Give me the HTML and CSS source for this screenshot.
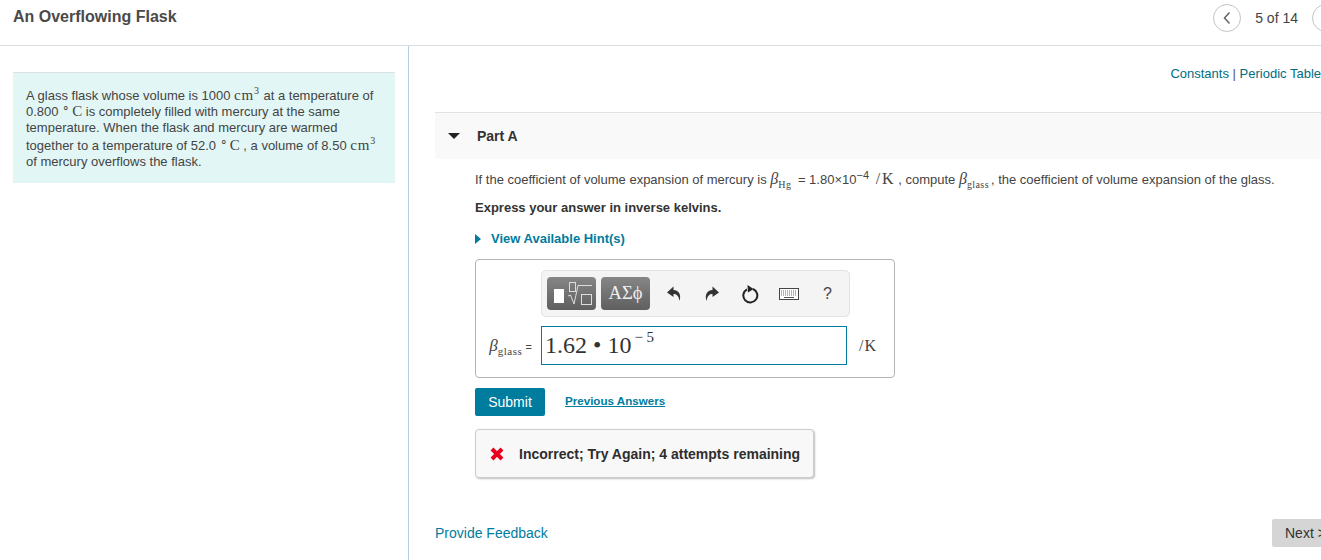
FILE: index.html
```html
<!DOCTYPE html>
<html lang="en">
<head>
    <meta charset="UTF-8">
    <meta name="viewport" content="width=device-width, initial-scale=1.0">
    <title>An Overflowing Flask</title>
    <link rel="stylesheet" href="styles.css">
</head>
<body>
    <div class="header">
        <div class="title">An Overflowing Flask</div>
        <div class="pager">
            <span class="pager-btn">
                <svg width="10" height="14" viewBox="0 0 10 14"><path d="M7.500 1.500 L2.500 7 L7.500 12.500" fill="none" stroke="#666" stroke-width="1.500"/></svg>
            </span>
            <span class="pager-text">5 of 14</span>
            <span class="pager-btn"></span>
        </div>
    </div>

    <div class="main">
        <div class="left">
            <div class="intro">
                <div>A glass flask whose volume is 1000 <span class="math cm">cm<sup>3</sup></span> at a temperature of</div>
                <div>0.800 <span class="math"><sup class="deg">∘</sup>C</span> is completely filled with mercury at the same</div>
                <div>temperature. When the flask and mercury are warmed</div>
                <div class="tall">together to a temperature of 52.0 <span class="math"><sup class="deg">∘</sup>C</span> , a volume of 8.50 <span class="math cm">cm<sup>3</sup></span></div>
                <div>of mercury overflows the flask.</div>
            </div>
        </div>

        <div class="right">
            <div class="top-links">
                <a href="#">Constants</a> <span class="sep">|</span> <a href="#">Periodic Table</a>
            </div>

            <div class="part-head">
                <span class="part-arrow"></span>
                <span class="part-name">Part A</span>
            </div>

            <div class="part-body">
                <p class="question">If the coefficient of volume expansion of mercury is <span class="math symbol"><i class="beta">β</i><sub>Hg</sub></span> = 1.80×10<sup class="exp">−4</sup> <span class="math unit">/K</span> , compute <span class="math symbol-end"><i class="beta">β</i><sub>glass</sub></span>, the coefficient of volume expansion of the glass.</p>
                <p class="express">Express your answer in inverse kelvins.</p>
                <a class="hints" href="#"><span class="hint-arrow"></span>View Available Hint(s)</a>

                <div class="answer-box">
                    <div class="toolbar">
                        <span class="tool-btn">
                            <svg width="49" height="33" viewBox="0 0 49 33">
                                <rect x="7" y="12" width="10" height="14" fill="#fff"/>
                                <rect x="22.500" y="5.500" width="6" height="9" fill="none" stroke="#ddd"/>
                                <path d="M21 19 L23.500 18 L27 27 L31 8.500 H45" fill="none" stroke="#ddd"/>
                                <rect x="34.500" y="17.500" width="10" height="10" fill="none" stroke="#ddd"/>
                            </svg>
                        </span>
                        <span class="tool-btn tool-greek">ΑΣϕ</span>
                        <span class="tool-icon">
                            <svg width="16" height="16" viewBox="0 0 16 16"><path d="M7.500 0.500 L1 6.500 L7.500 11 V8 C10.500 8 12.500 9.500 13.500 15 C15.500 9 13 4 7.500 4 Z" fill="#333"/></svg>
                        </span>
                        <span class="tool-icon">
                            <svg width="16" height="16" viewBox="0 0 16 16"><path d="M8.500 0.500 L15 6.500 L8.500 11 V8 C5.500 8 3.500 9.500 2.500 15 C0.500 9 3 4 8.500 4 Z" fill="#333"/></svg>
                        </span>
                        <span class="tool-icon">
                            <svg width="18" height="20" viewBox="0 0 18 20"><path d="M11 5 A7 7 0 1 1 5 5.300" fill="none" stroke="#222" stroke-width="2"/><path d="M5.500 1 L11.500 5 L6 8.500 Z" fill="#222"/></svg>
                        </span>
                        <span class="tool-icon">
                            <svg width="20" height="12" viewBox="0 0 20 12"><rect x="0.500" y="0.500" width="19" height="11" fill="#fff" stroke="#444"/><path d="M2 3 H18 M2 5 H18 M2 7 H18" stroke="#666" stroke-dasharray="1 1"/><path d="M5 9.500 H15" stroke="#555"/></svg>
                        </span>
                        <span class="tool-icon tool-help">?</span>
                    </div>
                    <div class="answer-row">
                        <span class="math answer-label"><i class="beta">β</i><sub>glass</sub> <span class="equals">=</span></span>
                        <div class="answer-input">1.62 • 10<sup>− 5</sup></div>
                        <span class="math answer-unit">/K</span>
                    </div>
                </div>

                <div class="actions">
                    <button class="submit">Submit</button>
                    <a class="previous" href="#">Previous Answers</a>
                </div>

                <div class="feedback">
                    <svg width="14" height="14" viewBox="0 0 14 14"><path d="M2 2 L12 12 M12 2 L2 12" stroke="#e8001c" stroke-width="4"/></svg>
                    <span>Incorrect; Try Again; 4 attempts remaining</span>
                </div>
            </div>

            <div class="footer">
                <a href="#">Provide Feedback</a>
                <button class="next">Next &gt;</button>
            </div>
        </div>
    </div>
</body>
</html>
```

FILE: styles.css
```css
body {
    font-family: 'Liberation Sans', Arial, sans-serif;
    margin: 0;
    padding: 0;
    background-color: #ffffff;
    color: #333333;
    width: 1321px;
    height: 560px;
    overflow: hidden;
    font-size: 13px;
}
a {
    color: #007c9e;
    text-decoration: none;
}
.math {
    font-family: 'Liberation Serif', 'Times New Roman', serif;
}
.beta {
    font-size: 16px;
    color: #444;
}
sub {
    font-size: 10px;
    line-height: 0;
    letter-spacing: 0.4px;
}
sup {
    font-size: 10px;
    line-height: 0;
}

/* top bar */
.header {
    height: 45px;
    border-bottom: 1px solid #dcdfe2;
    display: flex;
    justify-content: space-between;
    padding-left: 13px;
}
.title {
    font-size: 16px;
    font-weight: bold;
    color: #4a4a4a;
    padding-top: 8px;
}
.pager {
    display: flex;
    align-items: center;
    height: 36px;
    margin-right: -19px;
}
.pager-btn {
    width: 26px;
    height: 26px;
    border: 1px solid #c4c4c4;
    border-radius: 50%;
    display: flex;
    align-items: center;
    justify-content: center;
}
.pager-text {
    font-size: 14px;
    color: #444;
    margin: 0 14px;
}

.main {
    display: flex;
    height: 514px;
}

/* left column */
.left {
    width: 382px;
    border-right: 1px solid #b5cde0;
    padding: 26px 13px 0;
}
.intro {
    background-color: #e2f6f5;
    border-top: 1px solid #d9e3e6;
    padding: 15px 13px 13px;
    height: 82px;
    line-height: 16px;
    color: #444;
}
.intro .math {
    font-size: 15px;
    line-height: 0;
}
.intro .cm {
    letter-spacing: 0.8px;
}
.intro sup {
    font-size: 10px;
}
.intro .deg {
    font-size: 12px;
    margin-right: 2px;
    vertical-align: 4px;
}
.tall {
    margin-top: 2px;
}

/* right column */
.right {
    flex: 1;
    padding-left: 26px;
    min-width: 0;
}
.top-links {
    text-align: right;
    margin-top: 20px;
    height: 19px;
    line-height: 15px;
}
.top-links a {
    color: #006d83;
}
.sep {
    color: #555;
}
.part-head {
    margin-top: 27px;
    height: 46px;
    border-top: 1px solid #e2e2e2;
    background-color: #f9f9f9;
    display: flex;
    align-items: center;
    padding-left: 13px;
}
.part-arrow {
    width: 0;
    height: 0;
    border-left: 6px solid transparent;
    border-right: 6px solid transparent;
    border-top: 6px solid #222;
    margin-right: 17px;
    margin-top: -1px;
}
.part-name {
    font-size: 14px;
    font-weight: bold;
    color: #333;
}
.part-body {
    padding-left: 40px;
}
.question {
    margin: 0;
    padding-top: 11px;
    height: 21px;
    line-height: 17px;
    white-space: nowrap;
    color: #444;
}
.symbol {
    margin-right: 3px;
}
.symbol-end {
    margin-right: 2px;
}
.question .unit {
    font-size: 16px;
    letter-spacing: 2px;
    margin: 0 -1px 0 3px;
}
.exp {
    font-size: 11px;
}
.express {
    margin: 8px 0 0;
    font-weight: bold;
    line-height: 17px;
}
.hints {
    display: flex;
    align-items: center;
    margin-top: 14px;
    font-weight: bold;
    line-height: 17px;
    font-size: 13px;
}
.hint-arrow {
    width: 0;
    height: 0;
    border-top: 5px solid transparent;
    border-bottom: 5px solid transparent;
    border-left: 6px solid #007c9e;
    margin-right: 10px;
}

/* answer area */
.answer-box {
    margin-top: 12px;
    width: 418px;
    height: 117px;
    border: 1px solid #b4b4b4;
    border-radius: 4px;
}
.toolbar {
    box-sizing: border-box;
    width: 309px;
    height: 47px;
    margin: 10px 0 0 65px;
    background-color: #f4f4f4;
    border: 1px solid #e2e2e2;
    border-radius: 5px;
    display: flex;
    align-items: center;
    padding-left: 5px;
}
.tool-btn {
    width: 49px;
    height: 33px;
    margin-right: 5px;
    border-radius: 4px;
    background: linear-gradient(#868686, #5f5f5f);
    display: flex;
    align-items: center;
    justify-content: center;
    color: #eeeeee;
}
.tool-greek {
    font-family: 'Liberation Serif', serif;
    font-size: 18.500px;
}
.tool-icon {
    width: 38.300px;
    display: flex;
    justify-content: center;
    align-items: center;
}
.tool-help {
    font-size: 16px;
    color: #444;
}
.answer-row {
    display: flex;
    align-items: center;
    margin-top: 9px;
}
.answer-label {
    width: 65px;
    text-align: right;
    box-sizing: border-box;
    padding-right: 9px;
    white-space: nowrap;
    color: #444;
}
.answer-label .beta {
    font-size: 17px;
}
.answer-label sub {
    font-size: 11px;
    letter-spacing: 0.5px;
}
.equals {
    font-family: 'Liberation Sans', sans-serif;
    font-size: 11px;
}
.answer-input {
    box-sizing: border-box;
    width: 306px;
    height: 39px;
    border: 1px solid #007c9e;
    font-family: 'Liberation Serif', serif;
    font-size: 24px;
    line-height: 37px;
    padding-left: 3px;
    color: #333;
}
.answer-input sup {
    font-size: 15px;
    margin-left: 3px;
    vertical-align: 11px;
}
.answer-unit {
    font-size: 16px;
    letter-spacing: 1px;
    margin-left: 12px;
    color: #444;
}

.actions {
    display: flex;
    align-items: center;
    margin-top: 10px;
}
.submit {
    width: 70px;
    height: 28px;
    background-color: #007c9e;
    color: #ffffff;
    border: none;
    border-radius: 2px;
    font-family: inherit;
    font-size: 14px;
    padding: 0;
}
.previous {
    margin-left: 20px;
    font-size: 11.600px;
    font-weight: bold;
    text-decoration: underline;
    margin-top: -3px;
}
.feedback {
    margin-top: 13px;
    width: 323px;
    height: 47px;
    border: 1px solid #cccccc;
    border-radius: 4px;
    background-color: #f8f8f8;
    box-shadow: 1px 1px 2px rgba(0, 0, 0, 0.25);
    display: flex;
    align-items: center;
    padding-left: 14px;
    font-size: 14px;
    font-weight: bold;
    color: #2d2d2d;
}
.feedback svg {
    margin-right: 15px;
}

.footer {
    display: flex;
    justify-content: space-between;
    align-items: center;
    margin-top: 41px;
    font-size: 14px;
    margin-right: -21px;
}
.next {
    width: 70px;
    height: 28px;
    background-color: #d5d5d5;
    border: none;
    border-radius: 2px;
    color: #333;
    font-family: inherit;
    font-size: 14px;
    text-align: left;
    padding: 0 0 0 13px;
}
```
